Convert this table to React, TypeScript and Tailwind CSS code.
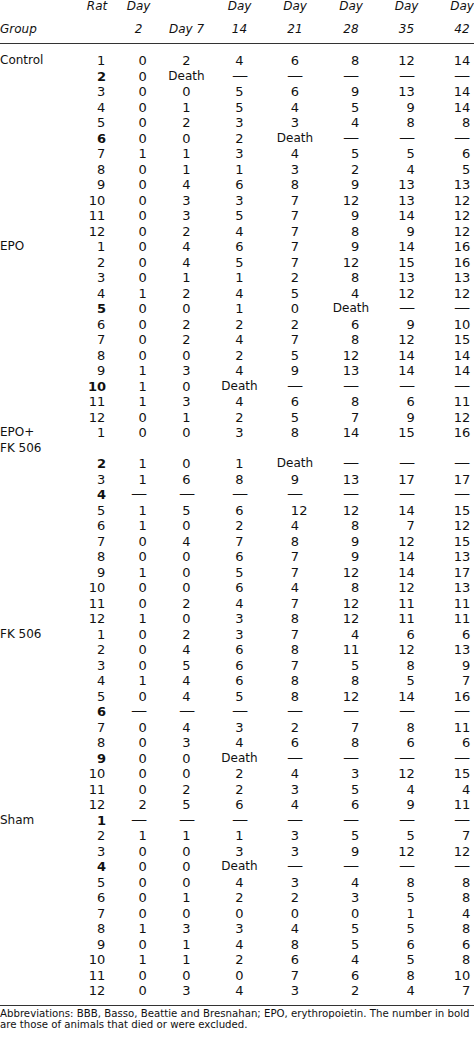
type Val = number | 'D' | '-';

interface Row {
  group?: string;
  rat?: number;
  bold?: boolean;
  vals?: Val[];
}

const raw: [string, [number, boolean, Val[]][]][] = [
  ['Control', [
    [1, false, [0, 2, 4, 6, 8, 12, 14]],
    [2, true, [0, 'D', '-', '-', '-', '-', '-']],
    [3, false, [0, 0, 5, 6, 9, 13, 14]],
    [4, false, [0, 1, 5, 4, 5, 9, 14]],
    [5, false, [0, 2, 3, 3, 4, 8, 8]],
    [6, true, [0, 0, 2, 'D', '-', '-', '-']],
    [7, false, [1, 1, 3, 4, 5, 5, 6]],
    [8, false, [0, 1, 1, 3, 2, 4, 5]],
    [9, false, [0, 4, 6, 8, 9, 13, 13]],
    [10, false, [0, 3, 3, 7, 12, 13, 12]],
    [11, false, [0, 3, 5, 7, 9, 14, 12]],
    [12, false, [0, 2, 4, 7, 8, 9, 12]],
  ]],
  ['EPO', [
    [1, false, [0, 4, 6, 7, 9, 14, 16]],
    [2, false, [0, 4, 5, 7, 12, 15, 16]],
    [3, false, [0, 1, 1, 2, 8, 13, 13]],
    [4, false, [1, 2, 4, 5, 4, 12, 12]],
    [5, true, [0, 0, 1, 0, 'D', '-', '-']],
    [6, false, [0, 2, 2, 2, 6, 9, 10]],
    [7, false, [0, 2, 4, 7, 8, 12, 15]],
    [8, false, [0, 0, 2, 5, 12, 14, 14]],
    [9, false, [1, 3, 4, 9, 13, 14, 14]],
    [10, true, [1, 0, 'D', '-', '-', '-', '-']],
    [11, false, [1, 3, 4, 6, 8, 6, 11]],
    [12, false, [0, 1, 2, 5, 7, 9, 12]],
  ]],
  ['EPO+|FK 506', [
    [1, false, [0, 0, 3, 8, 14, 15, 16]],
    [2, true, [1, 0, 1, 'D', '-', '-', '-']],
    [3, false, [1, 6, 8, 9, 13, 17, 17]],
    [4, true, ['-', '-', '-', '-', '-', '-', '-']],
    [5, false, [1, 5, 6, 12, 12, 14, 15]],
    [6, false, [1, 0, 2, 4, 8, 7, 12]],
    [7, false, [0, 4, 7, 8, 9, 12, 15]],
    [8, false, [0, 0, 6, 7, 9, 14, 13]],
    [9, false, [1, 0, 5, 7, 12, 14, 17]],
    [10, false, [0, 0, 6, 4, 8, 12, 13]],
    [11, false, [0, 2, 4, 7, 12, 11, 11]],
    [12, false, [1, 0, 3, 8, 12, 11, 11]],
  ]],
  ['FK 506', [
    [1, false, [0, 2, 3, 7, 4, 6, 6]],
    [2, false, [0, 4, 6, 8, 11, 12, 13]],
    [3, false, [0, 5, 6, 7, 5, 8, 9]],
    [4, false, [1, 4, 6, 8, 8, 5, 7]],
    [5, false, [0, 4, 5, 8, 12, 14, 16]],
    [6, true, ['-', '-', '-', '-', '-', '-', '-']],
    [7, false, [0, 4, 3, 2, 7, 8, 11]],
    [8, false, [0, 3, 4, 6, 8, 6, 6]],
    [9, true, [0, 0, 'D', '-', '-', '-', '-']],
    [10, false, [0, 0, 2, 4, 3, 12, 15]],
    [11, false, [0, 2, 2, 3, 5, 4, 4]],
    [12, false, [2, 5, 6, 4, 6, 9, 11]],
  ]],
  ['Sham', [
    [1, true, ['-', '-', '-', '-', '-', '-', '-']],
    [2, false, [1, 1, 1, 3, 5, 5, 7]],
    [3, false, [0, 0, 3, 3, 9, 12, 12]],
    [4, true, [0, 0, 'D', '-', '-', '-', '-']],
    [5, false, [0, 0, 4, 3, 4, 8, 8]],
    [6, false, [0, 1, 2, 2, 3, 5, 8]],
    [7, false, [0, 0, 0, 0, 0, 1, 4]],
    [8, false, [1, 3, 3, 4, 5, 5, 8]],
    [9, false, [0, 1, 4, 8, 5, 6, 6]],
    [10, false, [1, 1, 2, 6, 4, 5, 8]],
    [11, false, [0, 0, 0, 7, 6, 8, 10]],
    [12, false, [0, 3, 4, 3, 2, 4, 7]],
  ]],
];

// flatten; a two-line group name gets an extra empty line after its first row
const rows: Row[] = [];
raw.forEach(([name, items]) => {
  const parts = name.split('|');
  items.forEach(([rat, bold, vals], i) => {
    rows.push({ group: i === 0 ? parts[0] : undefined, rat, bold, vals });
    if (i === 0 && parts.length > 1) rows.push({ group: parts[1] });
  });
});

const wide = [false, true, true, false, false, false, true, true, true];

const grid =
  'grid grid-cols-[80px_34px_49px_47px_59px_52px_60px_51px_60px] w-[492px]';

function Value({ v, two }: { v: Val; two: boolean }) {
  if (v === 'D') return <span className="whitespace-nowrap">Death</span>;
  if (v === '-')
    return <span className="inline-block scale-x-[1.35]">—</span>;
  return (
    <span
      className={`inline-block text-right text-[13px] ${two ? 'w-[2ch]' : 'w-[1ch]'}`}
    >
      {v}
    </span>
  );
}

export default function App() {
  return (
    <div className="w-[474px] h-[1039px] overflow-hidden bg-white text-[#111] font-['DejaVu_Sans',sans-serif] text-[12px]">
      {/* header */}
      <div className="italic">
        <div className={`${grid} leading-[12px] text-center`}>
          <div />
          <div>Rat</div>
          <div>Day</div>
          <div />
          <div>Day</div>
          <div>Day</div>
          <div>Day</div>
          <div>Day</div>
          <div>Day</div>
        </div>
        <div className={`${grid} leading-[15.5px] text-center mt-[10px]`}>
          <div className="text-left">Group</div>
          <div />
          <div>2</div>
          <div className="whitespace-nowrap">Day 7</div>
          <div>14</div>
          <div>21</div>
          <div>28</div>
          <div>35</div>
          <div>42</div>
        </div>
      </div>

      <div className="mt-[5px] h-[1.5px] bg-[#333]" />

      {/* body */}
      <div className="mt-[9px] leading-[15.5px]">
        {rows.map((r, i) => (
          <div key={i} className={`${grid} h-[15.5px]`}>
            <div className="whitespace-nowrap">{r.group}</div>
            <div className="text-center">
              {r.rat !== undefined && (
                <span
                  className={`inline-block w-[2ch] text-right text-[13px] ${r.bold ? 'font-bold' : ''}`}
                >
                  {r.rat}
                </span>
              )}
            </div>
            {r.vals
              ? r.vals.map((v, j) => (
                  <div key={j} className="flex justify-center">
                    <Value v={v} two={wide[j + 2]} />
                  </div>
                ))
              : null}
          </div>
        ))}
      </div>

      <div className="mt-[6px] h-[1.5px] bg-[#333]" />

      <p className="mt-[2px] text-[10.2px] leading-[11px]">
        Abbreviations: BBB, Basso, Beattie and Bresnahan; EPO, erythropoietin. The number in bold
        are those of animals that died or were excluded.
      </p>
    </div>
  );
}
